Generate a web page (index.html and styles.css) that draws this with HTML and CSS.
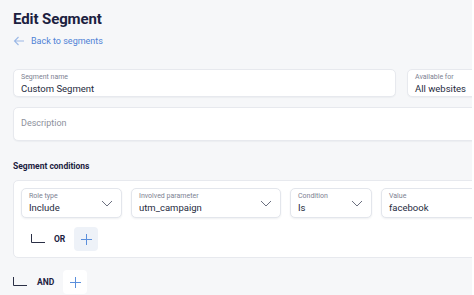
FILE: index.html
```html
<html>
    <head>
        <title>Edit Segment</title>
        <meta charset="utf-8">
        <link rel="stylesheet" href="styles.css">
    </head>
    <body>
        <div class="page">
            <h1 class="title">Edit Segment</h1>
            <a class="back" href="#">
                <svg width="12" height="10" viewBox="0 0 12 10"><path d="M11 5H1.5M5.5 1L1.5 5l4 4" fill="none" stroke="#9bb8e6" stroke-width="1.1"/></svg>
                <span>Back to segments</span>
            </a>

            <div class="top-row">
                <div class="field name">
                    <div class="label">Segment name</div>
                    <div class="value">Custom Segment</div>
                </div>
                <div class="field avail">
                    <div class="label">Available for</div>
                    <div class="value">All websites</div>
                </div>
            </div>

            <div class="field desc">
                <div class="placeholder">Description</div>
            </div>

            <div class="section-title">Segment conditions</div>

            <div class="card">
                <div class="cond-row">
                    <div class="field select w-role">
                        <div>
                            <div class="label">Role type</div>
                            <div class="value">Include</div>
                        </div>
                        <svg class="chev" width="12" height="7" viewBox="0 0 12 7"><path d="M1 1l5 5 5-5" fill="none" stroke="#6b7080" stroke-width="1"/></svg>
                    </div>
                    <div class="field select w-param">
                        <div>
                            <div class="label">Involved parameter</div>
                            <div class="value">utm_campaign</div>
                        </div>
                        <svg class="chev" width="12" height="7" viewBox="0 0 12 7"><path d="M1 1l5 5 5-5" fill="none" stroke="#6b7080" stroke-width="1"/></svg>
                    </div>
                    <div class="field select w-cond">
                        <div>
                            <div class="label">Condition</div>
                            <div class="value">Is</div>
                        </div>
                        <svg class="chev" width="12" height="7" viewBox="0 0 12 7"><path d="M1 1l5 5 5-5" fill="none" stroke="#6b7080" stroke-width="1"/></svg>
                    </div>
                    <div class="field w-value">
                        <div class="label">Value</div>
                        <div class="value">facebook</div>
                    </div>
                </div>
                <div class="logic or">
                    <svg width="14" height="9" viewBox="0 0 14 9"><path d="M0.5 0v8.5H14" fill="none" stroke="#2a2f45" stroke-width="1"/></svg>
                    <span class="word">OR</span>
                    <div class="plus tinted">
                        <svg width="11" height="11" viewBox="0 0 11 11"><path d="M5.5 0v11M0 5.5h11" stroke="#5b8fdc" stroke-width="1"/></svg>
                    </div>
                </div>
            </div>

            <div class="logic and">
                <svg width="14" height="9" viewBox="0 0 14 9"><path d="M0.5 0v8.5H14" fill="none" stroke="#2a2f45" stroke-width="1"/></svg>
                <span class="word">AND</span>
                <div class="plus">
                    <svg width="11" height="11" viewBox="0 0 11 11"><path d="M5.5 0v11M0 5.5h11" stroke="#5b8fdc" stroke-width="1"/></svg>
                </div>
            </div>
        </div>
    </body>
</html>
```

FILE: styles.css
```css
body
{
    margin: 0;
    background: #ffffff;
    font-family: Roboto, "Noto Sans", sans-serif;
    color: #262b40;
}
.page
{
    width: 459px;
    height: 295px;
    padding-left: 13px;
    background: #f6f7f9;
    overflow: hidden;
}
.title
{
    margin: 0;
    padding-top: 7px;
    font-size: 15px;
    line-height: 24px;
    font-weight: 700;
    letter-spacing: -0.1px;
    color: #1b2140;
}
.back
{
    display: flex;
    align-items: center;
    gap: 6px;
    margin-top: 3px;
    height: 13px;
    font-size: 9px;
    color: #4f82d6;
    text-decoration: none;
}
.top-row
{
    display: flex;
    gap: 11px;
    margin-top: 22px;
    width: 520px;
}
.field
{
    box-sizing: border-box;
    background: #ffffff;
    border: 1px solid #e7e9ee;
    border-radius: 5px;
    box-shadow: 0 1px 1px rgba(30, 40, 70, 0.04);
    padding: 3px 7px;
}
.name
{
    width: 383px;
    height: 28px;
}
.avail
{
    width: 110px;
    height: 28px;
}
.label
{
    font-size: 7px;
    line-height: 9px;
    color: #7d8292;
}
.value
{
    font-size: 9.5px;
    line-height: 13px;
    color: #262b40;
}
.desc
{
    width: 520px;
    height: 34px;
    margin-top: 10px;
    padding-top: 10px;
}
.placeholder
{
    font-size: 9px;
    color: #8d919c;
}
.section-title
{
    margin-top: 19px;
    font-size: 8.5px;
    font-weight: 700;
    line-height: 13px;
    color: #1b2140;
}
.card
{
    box-sizing: border-box;
    width: 520px;
    height: 78px;
    margin-top: 7px;
    padding: 7px 7px;
    background: #ffffff;
    border: 1px solid #e7e9ee;
    border-radius: 5px;
}
.cond-row
{
    display: flex;
    gap: 9px;
}
.cond-row .field
{
    height: 30px;
    border-color: #e3e6ec;
    box-shadow: 0 1px 2px rgba(30, 40, 70, 0.07);
}
.select
{
    display: flex;
    justify-content: space-between;
    align-items: center;
    padding-right: 8px;
}
.select > div
{
    align-self: flex-start;
}
.w-role
{
    width: 101px;
}
.w-param
{
    width: 150px;
}
.w-cond
{
    width: 82px;
}
.w-value
{
    width: 120px;
}
.logic
{
    display: flex;
    align-items: center;
    height: 24px;
}
.logic > svg
{
    margin-top: -2px;
}
.word
{
    font-size: 8.5px;
    font-weight: 700;
    color: #1b2140;
}
.or
{
    margin-top: 9px;
    padding-left: 10px;
}
.or .word
{
    margin-left: 9px;
    margin-right: 9px;
}
.and
{
    margin-top: 12px;
}
.and .word
{
    margin-left: 10px;
    margin-right: 9px;
}
.plus
{
    display: flex;
    align-items: center;
    justify-content: center;
    width: 24px;
    height: 24px;
    border-radius: 4px;
    background: #ffffff;
}
.tinted
{
    background: #eef2f8;
}
```
